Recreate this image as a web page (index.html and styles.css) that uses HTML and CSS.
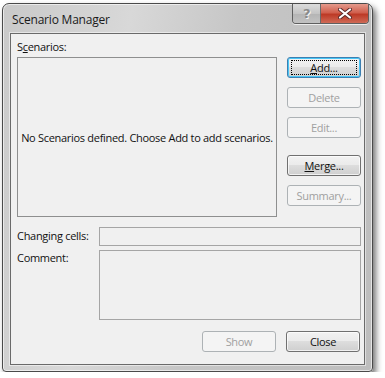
FILE: index.html
```html
<!DOCTYPE html>
<html lang="en">
<head>
    <meta charset="UTF-8">
    <title>Scenario Manager</title>
    <link rel="stylesheet" href="styles.css">
</head>
<body>
    <div class="window">
        <!-- Title bar -->
        <div class="titlebar">
            <span class="title">Scenario Manager</span>
            <div class="caption-buttons">
                <span class="cap-btn help">?</span>
                <span class="cap-btn close">
                    <svg width="14" height="11" viewBox="0 0 14 11">
                        <path d="M2 1.5 L12 9.5 M12 1.5 L2 9.5" stroke="#5a2a2a" stroke-width="4" stroke-linecap="round"/>
                        <path d="M2 1.5 L12 9.5 M12 1.5 L2 9.5" stroke="#ffffff" stroke-width="2.2" stroke-linecap="round"/>
                    </svg>
                </span>
            </div>
        </div>

        <!-- Client area -->
        <div class="client">
            <div class="label scen-label">S<u>c</u>enarios:</div>
            <div class="top-row">
                <div class="list-box">No Scenarios defined. Choose Add to add scenarios.</div>
                <div class="side-buttons">
                    <div class="btn focused"><span class="focus-ring"><u>A</u>dd...</span></div>
                    <div class="btn disabled">Delete</div>
                    <div class="btn disabled">Edit...</div>
                    <div class="btn merge"><u>M</u>erge...</div>
                    <div class="btn disabled">Summary...</div>
                </div>
            </div>
            <div class="field-row">
                <div class="label field-label">Changing cells:</div>
                <div class="input"></div>
            </div>
            <div class="field-row comment-row">
                <div class="label field-label">Comment:</div>
                <div class="textarea"></div>
            </div>
            <div class="bottom-buttons">
                <div class="btn disabled">Show</div>
                <div class="btn">Close</div>
            </div>
        </div>
    </div>
</body>
</html>
```

FILE: styles.css
```css
body {
    margin: 0;
    padding: 0;
    background-color: #ffffff;
    font-family: "Open Sans", "Noto Sans", sans-serif;
    font-size: 11px;
    letter-spacing: -0.3px;
    color: #111;
}
.window {
    margin: 3px 0 0 2px;
    width: 371px;
    height: 369px;
    box-sizing: border-box;
    border: 1px solid #4a4a4a;
    border-radius: 7px 7px 4px 4px;
    padding: 0 7px;
    background: linear-gradient(100deg, #c9c9c9 0%, #d8d8d8 30%, #c6c6c6 55%, #bdbdbd 100%);
    box-shadow: 3px 4px 6px rgba(0, 0, 0, 0.55), inset 0 0 0 1px rgba(255, 255, 255, 0.6);
}
.titlebar {
    height: 29px;
    display: flex;
    align-items: flex-start;
}
.title {
    padding: 7px 0 0 2px;
    font-size: 12px;
    letter-spacing: -0.2px;
    color: #1a1a1a;
}
.caption-buttons {
    margin-left: auto;
    margin-right: -4px;
    display: flex;
    border: 1px solid #5f5f5f;
    border-top: none;
    border-radius: 0 0 4px 4px;
    overflow: hidden;
    box-shadow: 0 1px 0 rgba(255, 255, 255, 0.7);
}
.cap-btn {
    height: 19px;
    display: flex;
    align-items: center;
    justify-content: center;
}
.help {
    width: 27px;
    border-right: 1px solid #6a6a6a;
    background: linear-gradient(#dcdcdc, #c4c4c4 50%, #b4b4b4 51%, #c2c2c2);
    font-family: "DejaVu Sans", sans-serif;
    font-weight: bold;
    font-size: 13px;
    color: #8a8a8a;
    text-shadow: 1px 1px 0 #f4f4f4;
}
.close {
    width: 47px;
    background: linear-gradient(#e49a8c, #d0604e 45%, #bd3a26 55%, #cf6a56);
}
.client {
    height: 332px;
    box-sizing: border-box;
    border: 1px solid #6a6a6a;
    background-color: #f0f0f0;
    padding: 5px 3px 0 6px;
    box-shadow: 0 0 0 1px rgba(255, 255, 255, 0.5);
}
.label {
    line-height: 16px;
}
.scen-label {
    margin-bottom: 2px;
}
.top-row {
    display: flex;
    gap: 10px;
}
.list-box {
    width: 261px;
    height: 160px;
    box-sizing: border-box;
    border: 1px solid #8e8f8f;
    background-color: #f0f0f0;
    display: flex;
    align-items: center;
    justify-content: center;
    white-space: nowrap;
}
.side-buttons {
    display: flex;
    flex-direction: column;
}
.btn {
    width: 74px;
    height: 21px;
    box-sizing: border-box;
    border: 1px solid #707070;
    border-radius: 3px;
    background: linear-gradient(#f2f2f2, #ebebeb 45%, #dddddd 50%, #cfcfcf);
    display: flex;
    align-items: center;
    justify-content: center;
    box-shadow: inset 0 0 0 1px rgba(255, 255, 255, 0.7);
}
.side-buttons .btn {
    margin-bottom: 9px;
}
.side-buttons .merge {
    margin-top: 8px;
}
.btn.focused {
    border-color: #3c7fb1;
    box-shadow: inset 0 0 0 1px #48c6f6;
}
.focus-ring {
    width: 66px;
    height: 15px;
    box-sizing: border-box;
    border: 1px dotted #000;
    display: flex;
    align-items: center;
    justify-content: center;
}
.btn.disabled {
    border-color: #adb2b5;
    background: #f4f4f4;
    color: #a0a0a0;
    box-shadow: none;
}
.field-row {
    display: flex;
    align-items: flex-start;
    margin-top: 10px;
}
.field-label {
    width: 82px;
    padding-top: 1px;
}
.input {
    width: 263px;
    height: 19px;
    box-sizing: border-box;
    border: 1px solid #a5a5a5;
    background-color: #f0f0f0;
}
.comment-row {
    margin-top: 4px;
}
.comment-row .field-label {
    padding-top: 0;
}
.textarea {
    width: 263px;
    height: 70px;
    box-sizing: border-box;
    border: 1px solid #a5a5a5;
    background-color: #f0f0f0;
}
.bottom-buttons {
    display: flex;
    justify-content: flex-end;
    gap: 10px;
    margin-top: 11px;
    padding-right: 1px;
}
```
